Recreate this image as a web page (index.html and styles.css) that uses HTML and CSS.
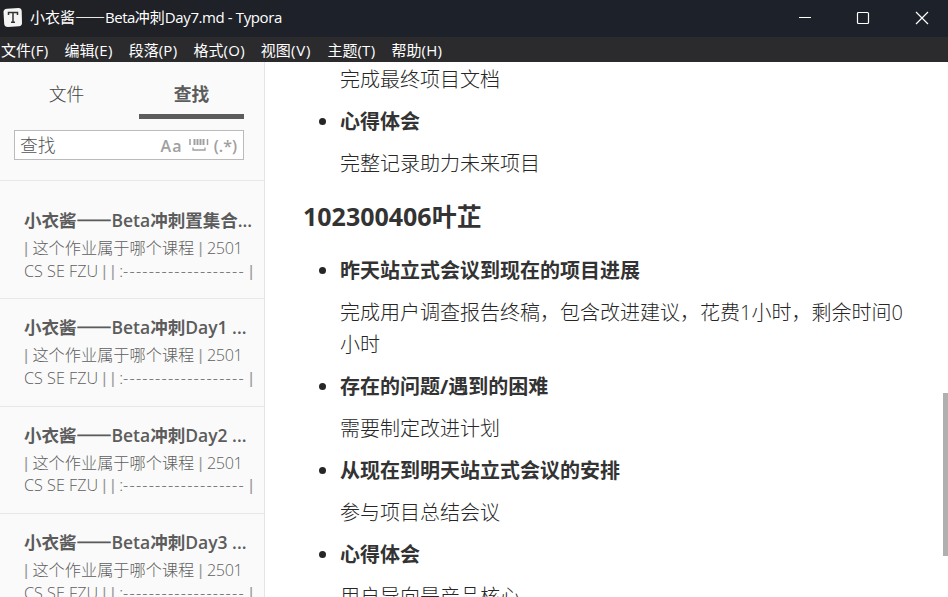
FILE: index.html
```html
<!DOCTYPE html>
<html lang="zh-CN">
<head>
  <meta charset="UTF-8" />
  <meta name="viewport" content="width=device-width, initial-scale=1.0"/>
  <title>小衣酱——Beta冲刺Day7.md - Typora</title>
  <link rel="stylesheet" href="styles.css">
</head>
<body>

  <header class="titlebar">
    <svg class="logo" width="20" height="20" viewBox="0 0 20 20">
      <path d="M4 .8 15.500 0Q18.500 0 18.700 3L19 15Q19 18 16 18.300L5 19Q1.500 19 1.200 16L.5 4Q.5 1 4 .8Z" fill="#f4f4f4"/>
      <path d="M5.500 7V4.500h9V7M10 4.500v9.500M8 14.300h4" fill="none" stroke="#333" stroke-width="1.500"/>
    </svg>
    <span class="title">小衣酱<span class="dash">——</span><span class="t1">Beta</span>冲刺<span class="t2">Day7.md - Typora</span></span>
    <svg class="controls" width="132" height="14" viewBox="0 0 132 14" fill="none" stroke="#fff">
      <path d="M0 6.500h12"/>
      <rect x="58.500" y="1.500" width="11" height="11" rx="1" stroke-width="1.200"/>
      <path d="M117 1l12 12M129 1l-12 12" stroke-width="1.200"/>
    </svg>
  </header>

  <nav class="menubar">
    <span>文件<i>(F)</i></span>
    <span>编辑<i>(E)</i></span>
    <span>段落<i>(P)</i></span>
    <span>格式<i>(O)</i></span>
    <span>视图<i class="wide">(V)</i></span>
    <span>主题<i>(T)</i></span>
    <span>帮助<i>(H)</i></span>
  </nav>

  <main class="main">
    <aside class="sidebar">
      <div class="search-panel">
        <div class="tabs">
          <div class="tab">文件</div>
          <div class="tab active">查找</div>
        </div>
        <div class="search">
          <span class="placeholder">查找</span>
          <span class="opt case">Aa</span>
          <svg class="word" width="20" height="14" viewBox="0 0 20 14" fill="none" stroke="#a0a0a0">
            <path d="M1 1v6M18.500 1v6" stroke-width="1.500"/>
            <path d="M5.500 1v6M8.500 1v6M11.500 1v6M14.500 1v6" stroke-width="2"/>
            <path d="M4 9.500v2.500h12V9.500" stroke-width="1.300"/>
          </svg>
          <span class="opt regex">(.*)</span>
        </div>
      </div>
      <div class="file">
        <div class="file-name">小衣酱<span class="dash">——</span><b>Beta</b>冲刺置集合<b>...</b></div>
        <div class="line"><span class="bar">|</span> 这个作业属于哪个课程 <span class="bar">|</span> <span class="num">2501</span></div>
        <div class="line">CS SE FZU <span class="bar">|</span> <span class="bar">|</span> :<span class="dashes">-------------------</span> <span class="bar">|</span></div>
      </div>
      <div class="file">
        <div class="file-name">小衣酱<span class="dash">——</span><b>Beta</b>冲刺<b>Day1 ...</b></div>
        <div class="line"><span class="bar">|</span> 这个作业属于哪个课程 <span class="bar">|</span> <span class="num">2501</span></div>
        <div class="line">CS SE FZU <span class="bar">|</span> <span class="bar">|</span> :<span class="dashes">-------------------</span> <span class="bar">|</span></div>
      </div>
      <div class="file">
        <div class="file-name">小衣酱<span class="dash">——</span><b>Beta</b>冲刺<b>Day2 ...</b></div>
        <div class="line"><span class="bar">|</span> 这个作业属于哪个课程 <span class="bar">|</span> <span class="num">2501</span></div>
        <div class="line">CS SE FZU <span class="bar">|</span> <span class="bar">|</span> :<span class="dashes">-------------------</span> <span class="bar">|</span></div>
      </div>
      <div class="file">
        <div class="file-name">小衣酱<span class="dash">——</span><b>Beta</b>冲刺<b>Day3 ...</b></div>
        <div class="line"><span class="bar">|</span> 这个作业属于哪个课程 <span class="bar">|</span> <span class="num">2501</span></div>
        <div class="line">CS SE FZU <span class="bar">|</span> <span class="bar">|</span> :<span class="dashes">-------------------</span> <span class="bar">|</span></div>
      </div>
    </aside>

    <article class="content">
      <ul>
        <li class="cont"><p>完成最终项目文档</p></li>
        <li><p><strong>心得体会</strong></p><p>完整记录助力未来项目</p></li>
      </ul>
      <h3>102300406叶芷</h3>
      <ul>
        <li><p><strong>昨天站立式会议到现在的项目进展</strong></p><p>完成用户调查报告终稿，包含改进建议，花费1小时，剩余时间0小时</p></li>
        <li><p><strong>存在的问题/遇到的困难</strong></p><p>需要制定改进计划</p></li>
        <li><p><strong>从现在到明天站立式会议的安排</strong></p><p>参与项目总结会议</p></li>
        <li><p><strong>心得体会</strong></p><p>用户导向是产品核心</p></li>
      </ul>
    </article>
    <div class="scrollbar"><div class="thumb"></div></div>
  </main>

</body>
</html>
```

FILE: styles.css
```css
* {
  box-sizing: border-box;
}
body {
  margin: 0;
  height: 597px;
  overflow: hidden;
  display: flex;
  flex-direction: column;
  font-family: "Open Sans", "Noto Sans CJK SC", sans-serif;
  background: #fff;
  color: #333;
}
.titlebar {
  flex: none;
  height: 37px;
  display: flex;
  align-items: center;
  padding: 0 17px 1px 3px;
  background: linear-gradient(90deg, #202124, #1d212a 40%);
  color: #fff;
}
.title {
  margin-left: 7px;
  font-size: 15px;
  line-height: 20px;
  padding-bottom: 2px;
  white-space: nowrap;
}
.dash {
  font-family: "Noto Sans CJK SC", sans-serif;
  -webkit-text-stroke: 0.2px currentColor;
}
.t1 {
  letter-spacing: -0.5px;
}
.t2 {
  letter-spacing: -0.4px;
}
.controls {
  margin-left: auto;
}
.menubar {
  flex: none;
  height: 25px;
  display: flex;
  gap: 16px;
  padding-left: 1px;
  background: #2b2b2e;
  color: #fff;
  font-size: 15px;
  line-height: 26px;
  white-space: nowrap;
}
.menubar i {
  font-style: normal;
  letter-spacing: 0.3px;
}
.menubar .wide {
  letter-spacing: 0.9px;
}
.main {
  flex: 1;
  min-height: 0;
  display: flex;
}
.sidebar {
  flex: none;
  width: 265px;
  overflow: hidden;
  background: #fafafa;
  border-right: 1px solid #e5e5e5;
  color: #5e5e5e;
}
.search-panel {
  height: 119px;
  padding: 0 20px 0 14px;
  border-bottom: 1px solid #e8e8e8;
}
.tabs {
  display: flex;
  justify-content: space-between;
  height: 57px;
  margin-bottom: 11px;
}
.tab {
  width: 105px;
  font-size: 17.8px;
  font-weight: 300;
  line-height: 64px;
  height: 57px;
  text-align: center;
  color: #444;
}
.tab.active {
  font-weight: bold;
  color: #5c5c5c;
  border-bottom: 5px solid #5c5c5c;
}
.search {
  display: flex;
  align-items: center;
  width: 230px;
  height: 30px;
  padding: 0 6px 0 5px;
  background: #fff;
  border: 1px solid #bbb;
}
.placeholder {
  margin-right: auto;
  font-size: 17.8px;
  font-weight: 300;
  line-height: 26px;
  color: #555;
}
.opt {
  padding-top: 1px;
  font-size: 16px;
  font-weight: 600;
  line-height: 26px;
  color: #a0a0a0;
}
.case {
  letter-spacing: 1.2px;
}
.word {
  margin: 0 5px 0 6px;
}
.file {
  height: 107.5px;
  padding: 15px 0 0 24px;
  border-bottom: 1px solid #e8e8e8;
  white-space: nowrap;
}
.search-panel + .file {
  height: 118px;
  padding-top: 26px;
}
.file-name {
  margin-bottom: 4px;
  font-size: 17.5px;
  font-weight: bold;
  line-height: 26px;
  color: #5c5c5c;
}
.file-name .dash {
  -webkit-text-stroke: 1px currentColor;
}
.file-name b {
  font-weight: 600;
  letter-spacing: 0;
}
.line {
  height: 22.5px;
  font-size: 16.2px;
  font-weight: 300;
  line-height: 22.5px;
}
.bar {
  font-family: "Liberation Sans", sans-serif;
  color: #999;
}
.num {
  letter-spacing: -0.4px;
}
.dashes {
  letter-spacing: 1.2px;
}
.content {
  flex: 1;
  padding: 2px 39px 0 38px;
  font-size: 20px;
  font-weight: 300;
  line-height: 32px;
  color: #262626;
  overflow: hidden;
}
.content ul {
  margin: 0;
  padding-left: 37px;
}
.content li.cont {
  list-style: none;
}
.content p {
  margin: 0 0 10px;
}
.content strong {
  font-weight: bold;
  color: #333;
}
.content h3 {
  margin: 18px 0 21px;
  font-size: 25px;
  line-height: 36px;
  color: #333;
}
.scrollbar {
  flex: none;
  width: 5px;
  padding-top: 331px;
}
.thumb {
  height: 163px;
  background: #b0b0b0;
}
```
